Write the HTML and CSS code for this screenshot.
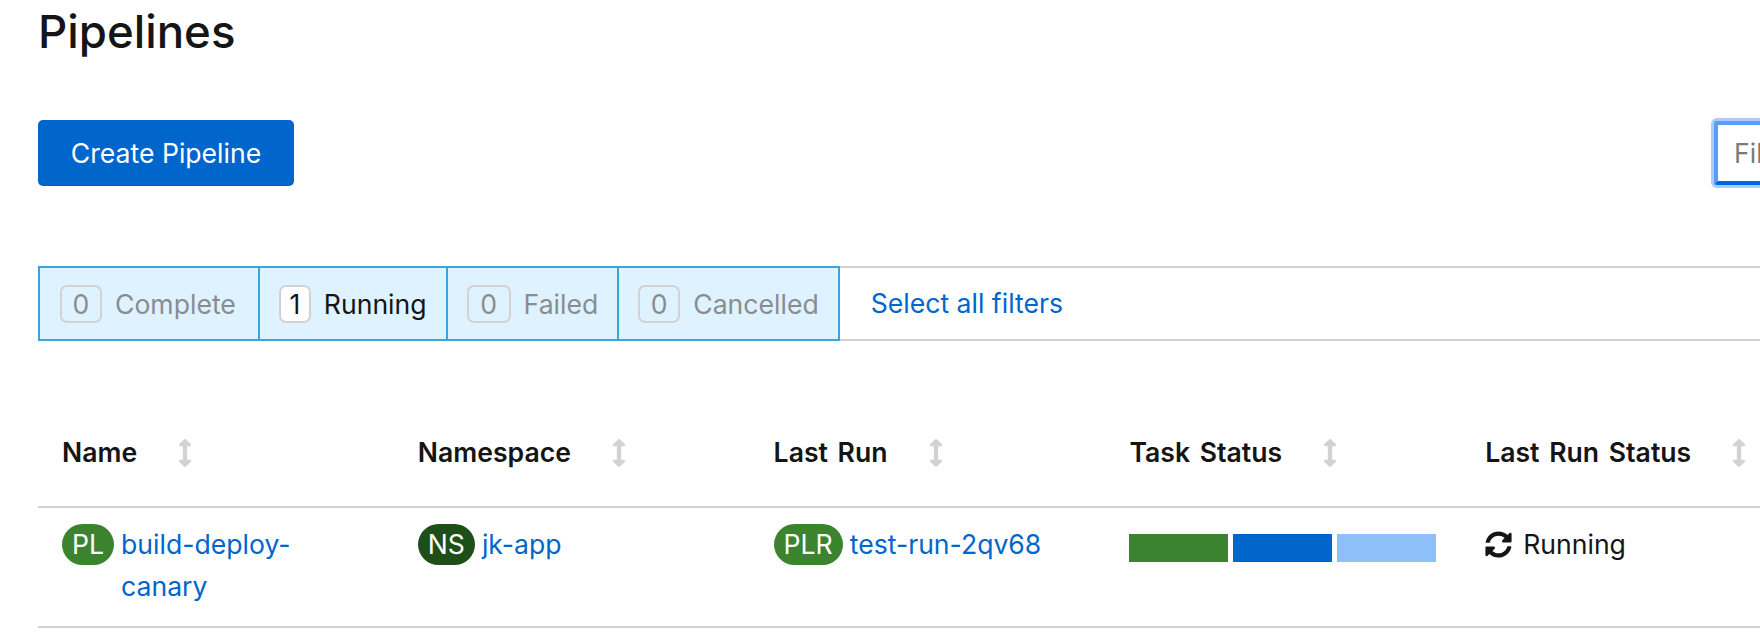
FILE: index.html
```html
<!DOCTYPE html>
<html lang="en">
<head>
    <meta charset="UTF-8">
    <title>Pipelines</title>
    <link rel="stylesheet" href="styles.css">
</head>
<body>
    <h1>Pipelines</h1>

    <div class="toolbar">
        <button class="create-btn">Create Pipeline</button>
        <input class="filter-input" type="text" placeholder="Filter by name...">
    </div>

    <div class="filter-row">
        <div class="filter-item off"><span class="count">0</span><span class="filter-name">Complete</span></div>
        <div class="filter-item"><span class="count">1</span><span class="filter-name">Running</span></div>
        <div class="filter-item off"><span class="count wide">0</span><span class="filter-name">Failed</span></div>
        <div class="filter-item off"><span class="count">0</span><span class="filter-name">Cancelled</span></div>
        <a class="link select-all" href="#">Select all filters</a>
    </div>

    <table class="pipelines">
        <thead>
            <tr>
                <th>Name<svg class="sort" viewBox="0 0 256 512"><use href="#sort-icon"/></svg></th>
                <th>Namespace<svg class="sort" viewBox="0 0 256 512"><use href="#sort-icon"/></svg></th>
                <th>Last Run<svg class="sort" viewBox="0 0 256 512"><use href="#sort-icon"/></svg></th>
                <th>Task Status<svg class="sort" viewBox="0 0 256 512"><use href="#sort-icon"/></svg></th>
                <th>Last Run Status<svg class="sort" viewBox="0 0 256 512"><use href="#sort-icon"/></svg></th>
            </tr>
        </thead>
        <tbody>
            <tr>
                <td><div class="res"><span class="badge">PL</span><a class="link name-link" href="#">build-deploy-canary</a></div></td>
                <td><div class="res"><span class="badge dark">NS</span><a class="link" href="#">jk-app</a></div></td>
                <td><div class="res"><span class="badge">PLR</span><a class="link" href="#">test-run-2qv68</a></div></td>
                <td>
                    <div class="task-bar">
                        <span class="seg green"></span>
                        <span class="seg blue"></span>
                        <span class="seg light"></span>
                    </div>
                </td>
                <td>
                    <div class="status">
                        <svg class="sync" viewBox="0 0 512 512"><path d="M370.72 133.28C339.458 104.008 298.888 87.962 255.848 88c-77.458.068-144.328 53.178-162.791 126.85-1.344 5.363-6.122 9.15-11.651 9.15H24.103c-7.498 0-13.194-6.807-11.807-14.176C33.933 94.924 134.813 8 256 8c66.448 0 126.791 26.136 171.315 68.685L463.03 40.97C478.149 25.851 504 36.559 504 57.941V192c0 13.255-10.745 24-24 24H345.941c-21.382 0-32.09-25.851-16.971-40.971l41.75-41.749zM32 296h134.059c21.382 0 32.09 25.851 16.971 40.971l-41.75 41.75c31.262 29.273 71.835 45.319 114.876 45.28 77.418-.07 144.315-53.144 162.787-126.849 1.344-5.363 6.122-9.15 11.651-9.15h57.304c7.498 0 13.194 6.807 11.807 14.176C478.067 417.076 377.187 504 256 504c-66.448 0-126.791-26.136-171.315-68.685L48.97 471.03C33.851 486.149 8 475.441 8 454.059V320c0-13.255 10.745-24 24-24z"/></svg>
                        Running
                    </div>
                </td>
            </tr>
        </tbody>
    </table>

    <svg class="defs" width="0" height="0">
        <symbol id="sort-icon" viewBox="0 0 256 512">
            <path d="M214.059 377.941H168V134.059h46.059c21.382 0 32.09-25.851 16.971-40.971L144.971 7.029c-9.373-9.373-24.569-9.373-33.941 0L24.971 93.088c-15.119 15.119-4.411 40.971 16.971 40.971H88v243.882H41.941c-21.382 0-32.09 25.851-16.971 40.971l86.059 86.059c9.373 9.373 24.569 9.373 33.941 0l86.059-86.059c15.12-15.119 4.412-40.971-16.97-40.971z"/>
        </symbol>
    </svg>
</body>
</html>
```

FILE: styles.css
```css
html, body {
    overflow: hidden;
}
body {
    margin: 0;
    height: 638px;
    padding: 0 0 0 38px;
    background-color: #fff;
    color: #151515;
    font-family: Inter, "Open Sans", Arial, sans-serif;
    font-size: 26.6px;
}
h1 {
    margin: 0;
    padding-top: 5px;
    height: 55px;
    line-height: 54px;
    font-size: 45.6px;
    font-weight: 500;
}
.toolbar {
    display: flex;
    align-items: center;
    gap: 1420px;
    margin-top: 60px;
    width: 1900px;
}
.create-btn {
    flex: none;
    width: 256px;
    height: 66px;
    border: none;
    border-radius: 5px;
    background-color: #06c;
    color: #fff;
    font-family: inherit;
    font-size: 26.6px;
}
.filter-input {
    flex: none;
    box-sizing: border-box;
    width: 300px;
    height: 64px;
    padding: 0 16px;
    border: 4px solid #5a9cf8;
    border-bottom-color: #0066e6;
    border-radius: 3px;
    box-shadow: 0 0 0 3px #a9ccfa;
    outline: none;
    font-family: inherit;
    font-size: 26.6px;
}
.filter-input::placeholder {
    color: #7a7a7a;
}
.filter-row {
    display: flex;
    align-items: stretch;
    box-sizing: border-box;
    height: 75px;
    margin-top: 80px;
    border-top: 2px solid #d2d2d2;
    border-bottom: 2px solid #d2d2d2;
}
.filter-item {
    display: flex;
    align-items: center;
    gap: 13px;
    margin: -2px 0 -2px -2px;
    padding: 0 19px;
    box-sizing: border-box;
    border: 2px solid #39a5dc;
    background-color: #def3ff;
}
.filter-item:first-child {
    margin-left: 0;
    padding: 0 22px 0 20px;
}
.count {
    display: flex;
    align-items: center;
    justify-content: center;
    box-sizing: border-box;
    width: 32px;
    height: 38px;
    border: 2px solid #d2d2d2;
    border-radius: 7px;
    background-color: #fff;
}
.off .count {
    width: 42px;
    background-color: transparent;
    color: #8a8d90;
}
.off .count.wide {
    width: 44px;
}
.off .filter-name {
    color: #8a8d90;
}
.link {
    color: #06c;
    text-decoration: none;
}
.select-all {
    align-self: center;
    margin: -2px 0 0 31px;
}
.pipelines {
    width: 1779px;
    table-layout: fixed;
    border-collapse: collapse;
}
.pipelines th {
    height: 166px;
    padding: 96px 0 0 24px;
    box-sizing: border-box;
    border-bottom: 2px solid #d2d2d2;
    text-align: left;
    vertical-align: top;
    font-size: 26.6px;
    line-height: 30px;
    font-weight: 600;
    word-spacing: 3px;
}
.sort {
    width: 14px;
    height: 28px;
    margin-left: 41px;
    vertical-align: -5px;
    fill: #d2d2d2;
}
.pipelines td {
    height: 120px;
    padding: 16px 24px 0;
    box-sizing: border-box;
    border-bottom: 2px solid #d2d2d2;
    vertical-align: top;
    line-height: 42px;
}
.res {
    display: flex;
    align-items: flex-start;
    gap: 7px;
}
.res .link {
    margin-top: -1px;
}
.badge {
    flex: none;
    height: 41px;
    padding: 0 10px;
    border-radius: 21px;
    background-color: #3b832f;
    color: #fff;
    line-height: 41px;
}
.badge.dark {
    background-color: #1e4f18;
}
.name-link {
    width: 200px;
}
.task-bar {
    display: flex;
    gap: 5px;
    padding-top: 10px;
}
.seg {
    width: 99px;
    height: 28px;
}
.green {
    background-color: #3b832f;
}
.blue {
    background-color: #06c;
}
.light {
    background-color: #8dc0f8;
}
.status {
    display: flex;
    align-items: center;
    gap: 11px;
    margin-top: -1px;
}
.sync {
    width: 27px;
    height: 27px;
    fill: #151515;
}
.defs {
    position: absolute;
}
```
